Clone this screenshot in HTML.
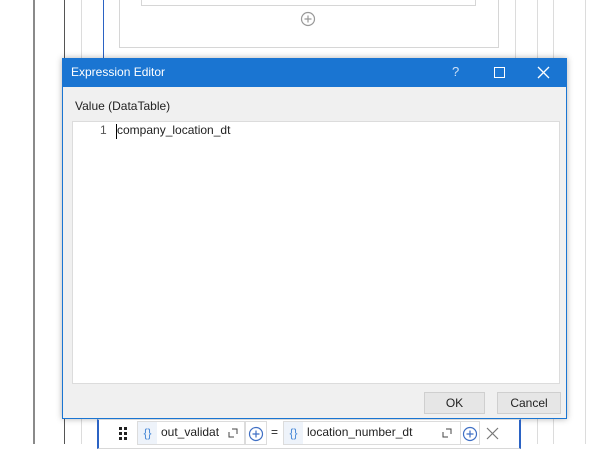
<!DOCTYPE html>
<html><head><style>
*{margin:0;padding:0;box-sizing:border-box}
body{width:600px;height:444px;overflow:hidden;background:#fff;position:relative;font-family:"Segoe UI","Liberation Sans",sans-serif;font-size:12px;color:#222}
.a{position:absolute}
.v{position:absolute;top:0;height:444px;width:1px;background:#dcdcdc}
</style></head><body>
<div class="v" style="left:33px;width:2px;background:#8a8a8a"></div>
<div class="v" style="left:64px;width:1px;background:#555"></div>
<div class="v" style="left:81px"></div>
<div class="v" style="left:103px;background:#2b63c4"></div>
<div class="v" style="left:515px"></div>
<div class="v" style="left:537px"></div>
<div class="v" style="left:553px"></div>
<div class="v" style="left:585px"></div>
<div class="a" style="left:119px;top:-2px;width:380px;height:50px;border:1px solid #d6d6d6;background:#fff"></div>
<div class="a" style="left:141px;top:-2px;width:335px;height:8px;border:1px solid #d6d6d6"></div>
<svg class="a" style="left:300px;top:11px" width="16" height="16"><circle cx="8" cy="8" r="6.5" fill="none" stroke="#999" stroke-width="1.2"/><path d="M8 4.5v7M4.5 8h7" stroke="#999" stroke-width="1.2"/></svg>

<div class="a" style="left:62px;top:58px;width:505px;height:361px;background:#f0f0f0;border:1px solid #1a75d2;box-shadow:0 0 6px rgba(0,0,0,.3)"></div>
<div class="a" style="left:62px;top:58px;width:505px;height:29px;background:#1a75d2"></div>
<div class="a" style="left:71px;top:65px;color:#fff;font-size:12px">Expression Editor</div>
<div class="a" style="left:452px;top:64px;color:#cfe0f5;font-size:13px">?</div>
<div class="a" style="left:494px;top:67px;width:11px;height:11px;border:1.3px solid #fff"></div>
<svg class="a" style="left:537px;top:66px" width="13" height="13"><path d="M1 1L12 12M12 1L1 12" stroke="#fff" stroke-width="1.3"/></svg>
<div class="a" style="left:75px;top:99px">Value (DataTable)</div>
<div class="a" style="left:72px;top:121px;width:488px;height:263px;background:#fff;border:1px solid #dcdcdc"></div>
<div class="a" style="left:100px;top:123px;color:#555">1</div>
<div class="a" style="left:116px;top:124px;width:1px;height:15px;background:#000"></div>
<div class="a" style="left:117px;top:123px">company_location_dt</div>
<div class="a" style="left:424px;top:392px;width:61px;height:22px;border:1px solid #cfcfcf;background:#e6e6e6;text-align:center;line-height:20px">OK</div>
<div class="a" style="left:497px;top:392px;width:64px;height:22px;border:1px solid #cfcfcf;background:#e6e6e6;text-align:center;line-height:20px">Cancel</div>

<div class="a" style="left:97px;top:419px;width:424px;height:30px;border:1px solid #d8d8d8;border-left:2px solid #2b63c4;border-right:2px solid #2b63c4;background:#fff"></div>
<svg class="a" style="left:119px;top:427px" width="10" height="13"><g fill="#222"><rect x="0" y="0" width="3" height="3"/><rect x="5" y="0" width="3" height="3"/><rect x="0" y="5" width="3" height="3"/><rect x="5" y="5" width="3" height="3"/><rect x="0" y="10" width="3" height="3"/><rect x="5" y="10" width="3" height="3"/></g></svg>
<div class="a" style="left:137px;top:421px;width:108px;height:24px;border:1px solid #dcdcdc"></div>
<div class="a" style="left:138px;top:422px;width:19px;height:22px;background:#eef3fa;color:#4a8ad8;text-align:center;line-height:22px">{}</div>
<div class="a" style="left:161px;top:425px">out_validat</div>
<svg class="a" style="left:228px;top:428px" width="10" height="10"><path d="M1 4v5h5M4 1h5v5" fill="none" stroke="#444"/></svg>
<div class="a" style="left:245px;top:421px;width:22px;height:24px;border:1px solid #dcdcdc"></div>
<svg class="a" style="left:248px;top:426px" width="16" height="16"><circle cx="8" cy="8" r="6.5" fill="none" stroke="#3f6fc4" stroke-width="1.2"/><path d="M8 4.5v7M4.5 8h7" stroke="#3f6fc4" stroke-width="1.2"/></svg>
<div class="a" style="left:271px;top:425px">=</div>
<div class="a" style="left:283px;top:421px;width:178px;height:24px;border:1px solid #dcdcdc"></div>
<div class="a" style="left:284px;top:422px;width:19px;height:22px;background:#eef3fa;color:#4a8ad8;text-align:center;line-height:22px">{}</div>
<div class="a" style="left:307px;top:425px">location_number_dt</div>
<svg class="a" style="left:442px;top:428px" width="10" height="10"><path d="M1 4v5h5M4 1h5v5" fill="none" stroke="#444"/></svg>
<div class="a" style="left:460px;top:421px;width:20px;height:24px;border:1px solid #dcdcdc"></div>
<svg class="a" style="left:462px;top:426px" width="16" height="16"><circle cx="8" cy="8" r="6.5" fill="none" stroke="#3f6fc4" stroke-width="1.2"/><path d="M8 4.5v7M4.5 8h7" stroke="#3f6fc4" stroke-width="1.2"/></svg>
<svg class="a" style="left:486px;top:427px" width="13" height="13"><path d="M1 1L12 12M12 1L1 12" stroke="#777" stroke-width="1.2"/></svg>
</body></html>
